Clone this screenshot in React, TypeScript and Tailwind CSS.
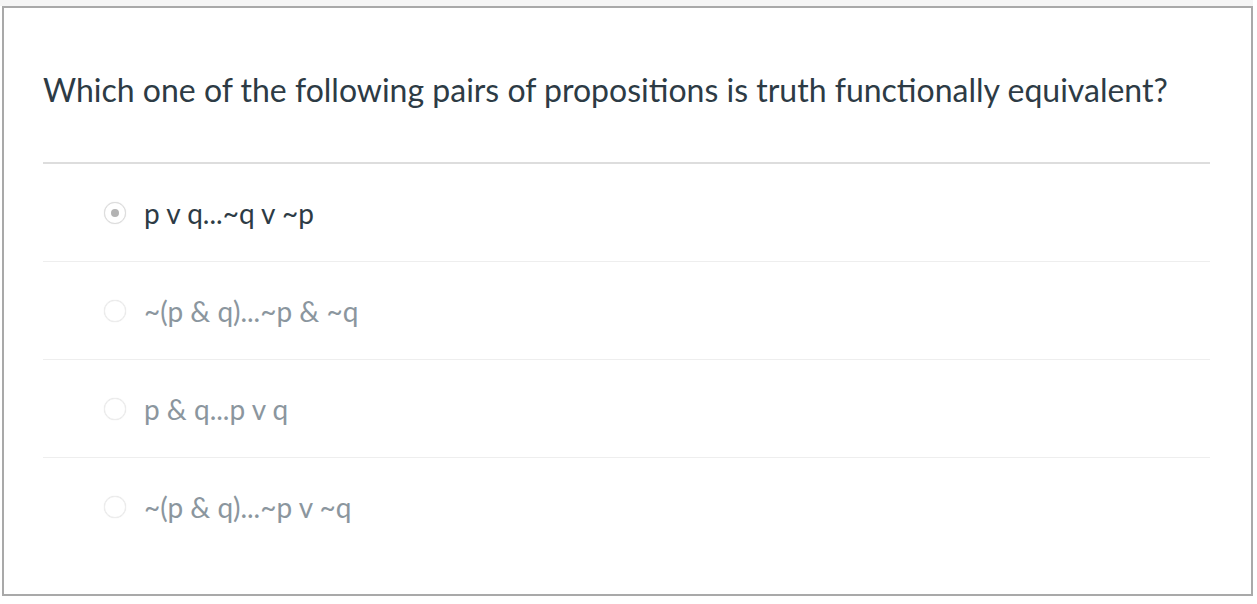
const options = [
  { label: "p v q...~q v ~p", selected: true },
  { label: "~(p & q)...~p & ~q", selected: false },
  { label: "p & q...p v q", selected: false },
  { label: "~(p & q)...~p v ~q", selected: false },
];

function Radio({ selected }: { selected: boolean }) {
  return (
    <span
      className={
        "flex h-[22px] w-[22px] shrink-0 items-center justify-center rounded-full bg-white shadow-[0_0_1px_rgba(0,0,0,0.15)] " +
        (selected ? "border border-[#dcdcdc]" : "border border-[#eeeeee]")
      }
    >
      {selected && <span className="h-[8px] w-[8px] rounded-full bg-[#b3b3b3]" />}
    </span>
  );
}

export default function App() {
  return (
    <div className="h-[604px] w-[1257px] bg-white font-['Lato','Noto_Sans',sans-serif]">
      <div className="h-[6px] w-[1253px] bg-[#f5f5f5]" />
      <div className="ml-[2px] h-[590px] w-[1251px] border-2 border-[#a9a9a9] bg-white pl-[39px] pr-[41px] pt-[63px]">
        <h1 className="text-[32px] leading-[38px] text-[#2d3b45]">
          Which one of the following pairs of propositions is truth functionally equivalent?
        </h1>
        <div className="mt-[53px] border-t-2 border-[#dddddd]">
          {options.map((o, i) => (
            <div
              key={i}
              className={
                "flex h-[98px] items-center gap-[18px] pl-[61px] " +
                (i < options.length - 1 ? "border-b border-[#eeeeee]" : "")
              }
            >
              <Radio selected={o.selected} />
              <span
                className={
                  "text-[28px] leading-[34px] " + (o.selected ? "text-[#2d3b45]" : "text-[#8b969e]")
                }
              >
                {o.label}
              </span>
            </div>
          ))}
        </div>
      </div>
    </div>
  );
}
